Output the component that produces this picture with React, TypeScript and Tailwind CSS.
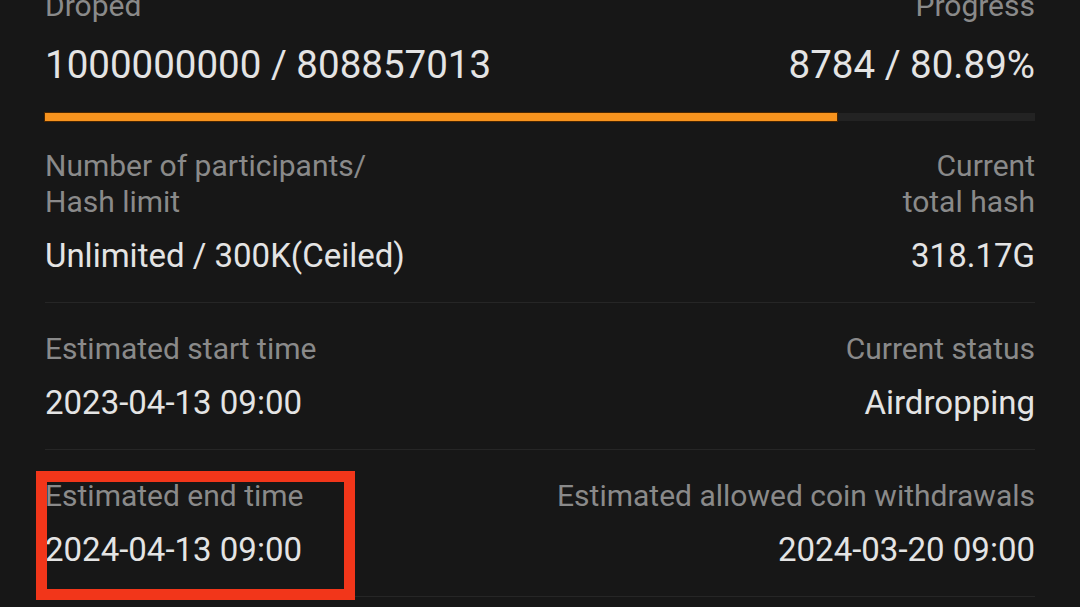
const rows = [
  {
    left: { label: ["Number of participants/", "Hash limit"], value: "Unlimited / 300K(Ceiled)" },
    right: { label: ["Current", "total hash"], value: "318.17G" },
  },
  {
    left: { label: ["Estimated start time"], value: "2023-04-13 09:00" },
    right: { label: ["Current status"], value: "Airdropping" },
  },
  {
    left: { label: ["Estimated end time"], value: "2024-04-13 09:00" },
    right: { label: ["Estimated allowed coin withdrawals"], value: "2024-03-20 09:00" },
    highlight: true,
  },
];

function Label({ lines }: { lines: string[] }) {
  return (
    <div className="text-[30px] leading-[36px] text-[#8a8a8a]">
      {lines.map((l, i) => (
        <div key={i}>{l}</div>
      ))}
    </div>
  );
}

export default function App() {
  return (
    <div
      className="h-[607px] w-[1080px] overflow-hidden bg-[#171717] px-[45px]"
      style={{ fontFamily: "Roboto, 'Noto Sans', sans-serif" }}
    >
      {/* Droped / Progress */}
      <div className="-mt-[12px] pb-[27px]">
        <div className="flex justify-between">
          <div>
            <Label lines={["Droped"]} />
            <div className="mt-[18px] text-[38.5px] leading-[46px] text-[#e4e4e4]">1000000000 / 808857013</div>
          </div>
          <div className="text-right">
            <Label lines={["Progress"]} />
            <div className="mt-[18px] text-[38.5px] leading-[46px] text-[#e4e4e4]">8784 / 80.89%</div>
          </div>
        </div>
        <div className="mt-[25px] h-[8px] w-full bg-[#232323]">
          <div className="h-full w-[80%] bg-[#f7931e] shadow-[0_0_0_1px_#4a2600]" />
        </div>
      </div>

      {rows.map((row, i) => (
        <div key={i} className={i === 0 ? "" : "border-t border-[#262626] pt-[28px]"}>
          <div className="relative flex justify-between pb-[26px]">
            {row.highlight && (
              <div className="pointer-events-none absolute -top-[7px] -left-[9px] h-[129px] w-[319px] border-[11px] border-[#f2361a]" />
            )}
            <div>
              <Label lines={row.left.label} />
              <div className="mt-[16px] text-[33px] leading-[40px] text-[#e4e4e4]">{row.left.value}</div>
            </div>
            <div className="text-right">
              <Label lines={row.right.label} />
              <div className="mt-[16px] text-[33px] leading-[40px] text-[#e4e4e4]">{row.right.value}</div>
            </div>
          </div>
        </div>
      ))}
      <div className="border-t border-[#262626]" />
    </div>
  );
}
